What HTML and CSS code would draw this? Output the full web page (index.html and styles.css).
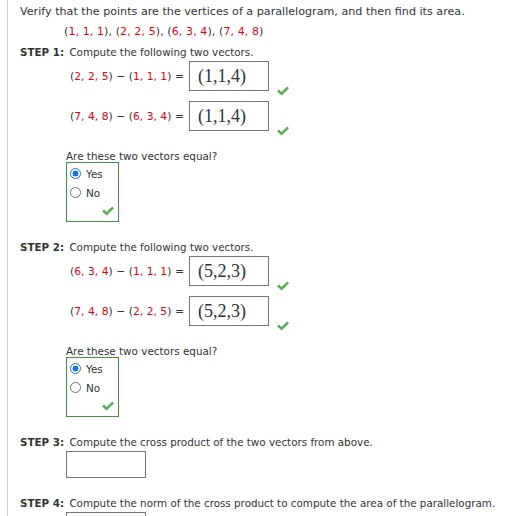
FILE: index.html
```html
<!DOCTYPE html>
<html>
<head>
<meta charset="utf-8">
<link rel="stylesheet" href="styles.css">
</head>
<body>
<div class="page">
  <p class="title">Verify that the points are the vertices of a parallelogram, and then find its area.</p>
  <p class="points">(<span class="r">1, 1, 1</span>), (<span class="r">2, 2, 5</span>), (<span class="r">6, 3, 4</span>), (<span class="r">7, 4, 8</span>)</p>

  <section class="step">
    <div class="step-head"><b>STEP 1:</b> Compute the following two vectors.</div>
    <div class="rows">
      <div class="row">
        <span class="expr">(<span class="r">2, 2, 5</span>) − (<span class="r">1, 1, 1</span>) =</span>
        <span class="box">(1,1,4)</span>
        <svg class="check" width="12" height="10" viewBox="0 0 12 10"><polygon points="0,5.2 2,3.4 4.6,6 10.2,0.4 12,2.2 4.6,9.6"/></svg>
      </div>
      <div class="row">
        <span class="expr">(<span class="r">7, 4, 8</span>) − (<span class="r">6, 3, 4</span>) =</span>
        <span class="box">(1,1,4)</span>
        <svg class="check" width="12" height="10" viewBox="0 0 12 10"><polygon points="0,5.2 2,3.4 4.6,6 10.2,0.4 12,2.2 4.6,9.6"/></svg>
      </div>
    </div>
    <div class="question">Are these two vectors equal?</div>
    <div class="choices">
      <div class="choice"><span class="radio on"></span>Yes</div>
      <div class="choice"><span class="radio"></span>No</div>
      <div class="choice-check"><svg class="check" width="12" height="10" viewBox="0 0 12 10"><polygon points="0,5.2 2,3.4 4.6,6 10.2,0.4 12,2.2 4.6,9.6"/></svg></div>
    </div>
  </section>

  <section class="step">
    <div class="step-head"><b>STEP 2:</b> Compute the following two vectors.</div>
    <div class="rows">
      <div class="row">
        <span class="expr">(<span class="r">6, 3, 4</span>) − (<span class="r">1, 1, 1</span>) =</span>
        <span class="box">(5,2,3)</span>
        <svg class="check" width="12" height="10" viewBox="0 0 12 10"><polygon points="0,5.2 2,3.4 4.6,6 10.2,0.4 12,2.2 4.6,9.6"/></svg>
      </div>
      <div class="row">
        <span class="expr">(<span class="r">7, 4, 8</span>) − (<span class="r">2, 2, 5</span>) =</span>
        <span class="box">(5,2,3)</span>
        <svg class="check" width="12" height="10" viewBox="0 0 12 10"><polygon points="0,5.2 2,3.4 4.6,6 10.2,0.4 12,2.2 4.6,9.6"/></svg>
      </div>
    </div>
    <div class="question">Are these two vectors equal?</div>
    <div class="choices">
      <div class="choice"><span class="radio on"></span>Yes</div>
      <div class="choice"><span class="radio"></span>No</div>
      <div class="choice-check"><svg class="check" width="12" height="10" viewBox="0 0 12 10"><polygon points="0,5.2 2,3.4 4.6,6 10.2,0.4 12,2.2 4.6,9.6"/></svg></div>
    </div>
  </section>

  <section class="step">
    <div class="step-head"><b>STEP 3:</b> Compute the cross product of the two vectors from above.</div>
    <div class="empty-box"></div>
  </section>

  <section class="step">
    <div class="step-head"><b>STEP 4:</b> Compute the norm of the cross product to compute the area of the parallelogram.</div>
    <div class="empty-box"></div>
  </section>
</div>
</body>
</html>
```
FILE: styles.css
```css
html, body {
  margin: 0;
  padding: 0;
  background: #fff;
}
body {
  font-family: "DejaVu Sans", Verdana, sans-serif;
  font-size: 10.4px;
  color: #333;
}
.page {
  margin-left: 7px;
  border-left: 1px solid #cfcfcf;
  padding: 2px 0 0 12px;
  height: 516px;
  overflow: hidden;
  box-sizing: border-box;
}
p {
  margin: 0;
}
.title {
  line-height: 20px;
  font-size: 11.15px;
  white-space: nowrap;
}
.points {
  line-height: 20px;
  padding-left: 44px;
  font-size: 11px;
  letter-spacing: 0.1px;
}
.r {
  color: #e8000d;
}
.step-head {
  line-height: 17px;
  padding-top: 1px;
  margin-top: 1px;
  font-size: 10.35px;
  white-space: nowrap;
}
.step-head b {
  font-weight: bold;
  margin-right: 2px;
}
.step + .step {
  margin-top: 16px;
}
.rows {
  display: flex;
  flex-direction: column;
  gap: 10px;
  padding-left: 50px;
}
.row {
  display: flex;
  align-items: center;
}
.expr {
  white-space: nowrap;
  font-size: 10.8px;
}
.box {
  box-sizing: border-box;
  width: 80px;
  height: 30px;
  border: 1px solid #777;
  margin-left: 5px;
  display: flex;
  align-items: center;
  padding-left: 8px;
  font-family: "Liberation Serif", "Times New Roman", serif;
  font-size: 18px;
  color: #333;
}
.check {
  display: block;
  fill: #5aac58;
}
.row .check {
  align-self: flex-end;
  margin-left: 8px;
  margin-bottom: -5px;
}
.question {
  margin-top: 19px;
  padding-left: 46px;
  line-height: 12px;
}
.choices {
  margin-left: 46px;
  width: 53px;
  height: 60px;
  box-sizing: border-box;
  border: 1px solid #3f953a;
  padding-top: 1px;
}
.choice {
  display: flex;
  align-items: center;
  height: 19px;
  padding-left: 3px;
}
.radio {
  box-sizing: border-box;
  width: 11px;
  height: 11px;
  border-radius: 50%;
  border: 1px solid #767676;
  margin-right: 5px;
  background: #fff;
}
.radio.on {
  border: 1.5px solid #1a73e8;
  background: radial-gradient(circle, #1a73e8 0 2.8px, #fff 3.2px);
}
.choice-check {
  display: flex;
  justify-content: flex-end;
  padding: 4px 4px 0 0;
}
.empty-box {
  margin-left: 46px;
  width: 80px;
  height: 27px;
  box-sizing: border-box;
  border: 1px solid #777;
}
```
